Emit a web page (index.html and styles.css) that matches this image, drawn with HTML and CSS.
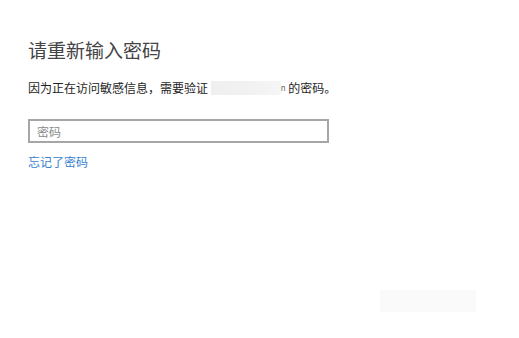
FILE: index.html
```html
<!DOCTYPE html>
<html lang="zh">
<head>
<meta charset="utf-8">
<link rel="stylesheet" href="styles.css">
</head>
<body>
<main class="page">
  <h1 class="title">请重新输入密码</h1>
  <p class="desc">因为正在访问敏感信息，需要验证 <span class="blur"></span><span class="tail">n</span> 的密码。</p>
  <div class="field"><span class="placeholder">密码</span></div>
  <a class="link" href="#">忘记了密码</a>
  <div class="mark"></div>
</main>
</body>
</html>
```
FILE: styles.css
```css
html, body {
  margin: 0;
  padding: 0;
  background: #fff;
  width: 519px;
  height: 338px;
  overflow: hidden;
}
.page {
  position: relative;
  height: 338px;
  padding: 37px 0 0 28px;
  box-sizing: border-box;
  font-family: "Noto Sans CJK SC", "Noto Sans", sans-serif;
  display: flex;
  flex-direction: column;
  align-items: flex-start;
}
.title {
  margin: 0;
  font-size: 19px;
  line-height: 25px;
  font-weight: 400;
  color: #444;
}
.desc {
  margin: 17px 0 0;
  font-size: 12px;
  line-height: 18px;
  color: #1e1e1e;
  display: flex;
  align-items: center;
  white-space: pre;
}
.blur {
  display: inline-block;
  width: 70px;
  height: 14px;
  background: linear-gradient(90deg, #efefef, #f2f2f2 60%, #f6f6f6);
}
.tail {
  font-size: 8px;
  color: #666;
}
.field {
  margin-top: 22px;
  width: 301px;
  height: 24px;
  box-sizing: border-box;
  border: 2px solid #a6a6a6;
  display: flex;
  align-items: center;
  padding-left: 7px;
}
.placeholder {
  font-size: 12px;
  color: #8a8a8a;
}
.link {
  margin-top: 10px;
  font-size: 12px;
  line-height: 18px;
  color: #3a7fcf;
  text-decoration: none;
}
.mark {
  position: absolute;
  left: 380px;
  top: 290px;
  width: 96px;
  height: 22px;
  background: #fafafa;
}
```
